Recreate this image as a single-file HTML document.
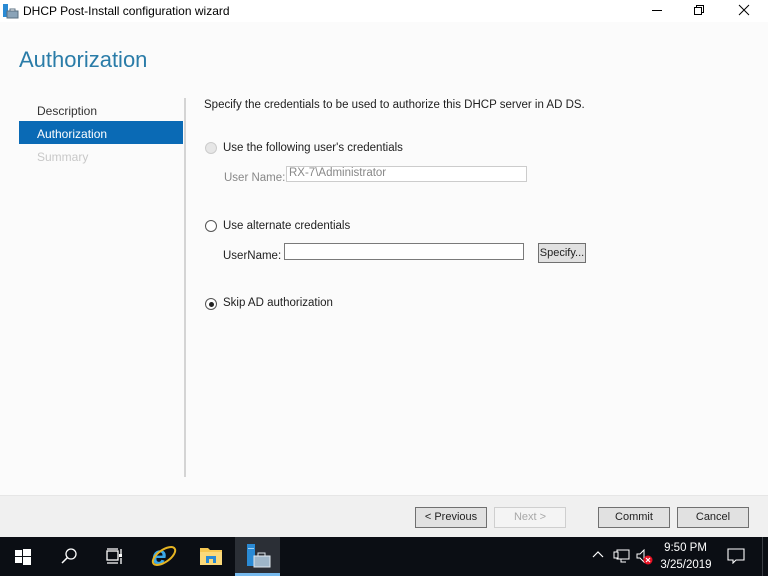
<!DOCTYPE html>
<html><head><meta charset="utf-8"><style>
*{margin:0;padding:0;box-sizing:border-box}
body{width:768px;height:576px;overflow:hidden;background:#fbfbfb;font-family:"Liberation Sans",sans-serif;font-size:11px;color:#1e1e1e;position:relative}
.a{position:absolute}
.t{white-space:nowrap}
.btn{position:absolute;height:21px;border:1px solid #adadad;background:#e1e1e1;text-align:center;line-height:19px;font-size:11px;color:#222}
.radio{position:absolute;width:12px;height:12px;border-radius:50%;border:1px solid #555;background:#fff}
</style></head><body>
<div class="a" style="left:0;top:0;width:768px;height:22px;background:#fff"></div>
<svg class="a" style="left:3px;top:4px" width="16" height="15" viewBox="0 0 16 15"><rect x="0" y="0" width="5" height="13" fill="#2a8ad4"/><rect x="4" y="7" width="11" height="7" fill="#8aa3b8" stroke="#5a6f80" stroke-width="1"/><rect x="7" y="5" width="5" height="2" fill="none" stroke="#5a6f80"/></svg>
<div class="a t" style="left:23px;top:4px;font-size:12px;color:#000">DHCP Post-Install configuration wizard</div>
<div class="a" style="left:652px;top:10px;width:10px;height:1px;background:#000"></div>
<svg class="a" style="left:694px;top:5px" width="11" height="11"><rect x="0.5" y="2.5" width="7" height="7" fill="none" stroke="#000"/><path d="M2.5 2.5V0.5H9.5V7.5H7.5" fill="none" stroke="#000"/></svg>
<svg class="a" style="left:738px;top:4px" width="12" height="12"><path d="M1 1L11 11M11 1L1 11" stroke="#000" stroke-width="1"/></svg>
<div class="a t" style="left:19px;top:47px;font-size:22px;color:#2a7ca8">Authorization</div>
<div class="a t" style="left:37px;top:104px;font-size:12px;color:#333">Description</div>
<div class="a" style="left:19px;top:121px;width:164px;height:23px;background:#0a6ab5"></div>
<div class="a t" style="left:37px;top:127px;font-size:12px;color:#fff">Authorization</div>
<div class="a t" style="left:37px;top:150px;font-size:12px;color:#c8c8c8">Summary</div>
<div class="a" style="left:184px;top:98px;width:2px;height:379px;background:#d4d4d4"></div>
<div class="a t" style="left:204px;top:99px;font-size:11.5px">Specify the credentials to be used to authorize this DHCP server in AD DS.</div>
<div class="radio" style="left:205px;top:142px;border-color:#ccc;background:#e6e6e6"></div>
<div class="a t" style="left:223px;top:142px;font-size:11.5px">Use the following user's credentials</div>
<div class="a t" style="left:224px;top:172px;font-size:11.5px;color:#888">User Name:</div>
<div class="a" style="left:286px;top:166px;width:241px;height:16px;border:1px solid #ccc;background:#fff"></div>
<div class="a t" style="left:289px;top:167px;font-size:11.5px;color:#888">RX-7\Administrator</div>
<div class="radio" style="left:205px;top:220px"></div>
<div class="a t" style="left:223px;top:220px;font-size:11.5px">Use alternate credentials</div>
<div class="a t" style="left:223px;top:250px;font-size:11.5px">UserName:</div>
<div class="a" style="left:284px;top:243px;width:240px;height:17px;border:1px solid #7a7a7a;background:#fff"></div>
<div class="btn" style="left:538px;top:243px;width:48px;height:20px;line-height:18px;border-color:#707070">Specify...</div>
<div class="radio" style="left:205px;top:298px"><div class="a" style="left:2.5px;top:2.5px;width:5px;height:5px;border-radius:50%;background:#222"></div></div>
<div class="a t" style="left:223px;top:297px;font-size:11.5px">Skip AD authorization</div>
<div class="a" style="left:0;top:495px;width:768px;height:42px;background:#f0f0f0;border-top:1px solid #e6e6e6"></div>
<div class="btn" style="left:415px;top:507px;width:72px;border-color:#707070">&lt; Previous</div>
<div class="btn" style="left:494px;top:507px;width:72px;background:#f4f4f4;border-color:#cfcfcf;color:#a8a8a8">Next &gt;</div>
<div class="btn" style="left:598px;top:507px;width:72px;border-color:#707070">Commit</div>
<div class="btn" style="left:677px;top:507px;width:72px;border-color:#707070">Cancel</div>
<div class="a" style="left:0;top:537px;width:768px;height:39px;background:#0b0e14"></div>
<svg class="a" style="left:15px;top:549px" width="16" height="16"><rect x="0" y="1" width="7" height="6" fill="#fff"/><rect x="8" y="0" width="8" height="7" fill="#fff"/><rect x="0" y="8" width="7" height="6" fill="#fff"/><rect x="8" y="8" width="8" height="8" fill="#fff"/></svg>
<svg class="a" style="left:60px;top:547px" width="18" height="18"><circle cx="11" cy="7" r="5" fill="none" stroke="#fff" stroke-width="1.3"/><path d="M7.5 10.5L2 16" stroke="#fff" stroke-width="1.5"/></svg>
<svg class="a" style="left:106px;top:548px" width="18" height="17"><rect x="1" y="3" width="11" height="9" fill="none" stroke="#fff" stroke-width="1.3"/><path d="M1 1H12M1 15H12M15 1V6M15 10V16" stroke="#fff" stroke-width="1.3"/><rect x="13" y="6" width="3" height="3" fill="#fff"/></svg>
<div class="a" style="left:152px;top:541px;font-size:26px;font-weight:bold;color:#3aa7e8;font-style:italic;line-height:28px">e</div>
<svg class="a" style="left:150px;top:542px" width="28" height="28"><ellipse cx="14" cy="14" rx="13" ry="6" fill="none" stroke="#e6b422" stroke-width="2" transform="rotate(-35 14 14)"/></svg>
<svg class="a" style="left:199px;top:546px" width="24" height="20"><path d="M1 2H9L11 4H23V19H1Z" fill="#f6c752"/><rect x="1" y="6" width="22" height="13" fill="#fbd97a"/><rect x="7" y="10" width="10" height="7" fill="#2a8ad4"/><rect x="10" y="13" width="4" height="4" fill="#fbd97a"/></svg>
<div class="a" style="left:235px;top:537px;width:45px;height:39px;background:#2b2f36"></div>
<div class="a" style="left:235px;top:573px;width:45px;height:3px;background:#76b9ed"></div>
<svg class="a" style="left:246px;top:544px" width="26" height="26"><rect x="1" y="0" width="8" height="22" fill="#2a8ad4"/><rect x="2" y="4" width="6" height="1" fill="#9fd0f5"/><rect x="8" y="12" width="16" height="11" fill="#9fb6c8" stroke="#e0e8ef"/><rect x="12" y="9" width="7" height="3" fill="none" stroke="#e0e8ef"/></svg>
<svg class="a" style="left:592px;top:550px" width="12" height="8"><path d="M1 7L6 2L11 7" fill="none" stroke="#fff" stroke-width="1.2"/></svg>
<svg class="a" style="left:613px;top:549px" width="18" height="14"><rect x="4" y="1" width="12" height="9" fill="none" stroke="#fff"/><rect x="1" y="3" width="4" height="6" fill="#0b0e14" stroke="#fff"/><path d="M8 10V13H13" stroke="#fff" fill="none"/></svg>
<svg class="a" style="left:636px;top:549px" width="18" height="16"><path d="M1 5H4L8 1V13L4 9H1Z" fill="none" stroke="#fff"/><circle cx="12" cy="11" r="4.5" fill="#e81123"/><path d="M10 9L14 13M14 9L10 13" stroke="#fff" stroke-width="1.2"/></svg>
<div class="a t" style="left:663px;top:542px;font-size:11.5px;color:#fff;width:45px;text-align:center">9:50 PM</div>
<div class="a t" style="left:659px;top:559px;font-size:11.5px;color:#fff;width:54px;text-align:center">3/25/2019</div>
<svg class="a" style="left:727px;top:548px" width="18" height="16"><path d="M1 1H17V12H9L6 15V12H1Z" fill="none" stroke="#fff" stroke-width="1.1"/></svg>
<div class="a" style="left:762px;top:537px;width:1px;height:39px;background:#3a3d44"></div>
</body></html>
